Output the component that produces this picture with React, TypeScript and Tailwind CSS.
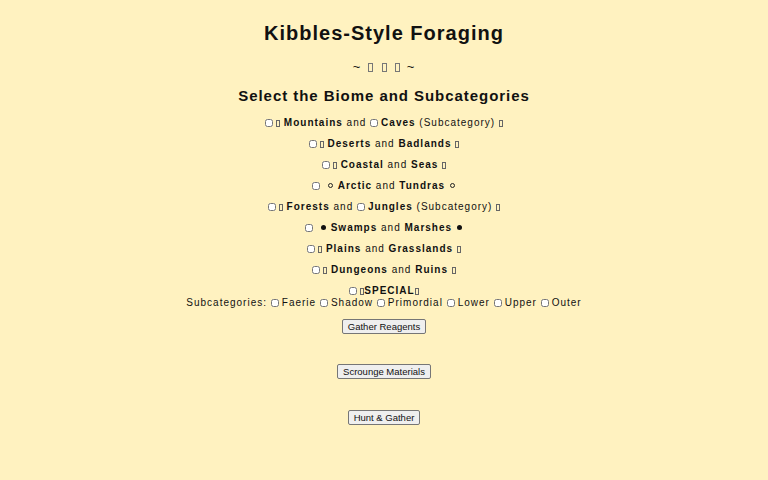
import React from "react";

const Box = () => (
  <input type="checkbox" className="m-0 mr-[3px] h-[8px] w-[8px] align-[-1px]" />
);

// Placeholder glyph box shown for pictographs the font can't draw
const G = () => (
  <span className="inline-block h-[7px] w-[4px] border border-[#666] align-[-1px]" />
);

const BigG = () => (
  <span className="mx-[2px] inline-block h-[9px] w-[5px] border border-[#777] align-[-1px]" />
);

const Ring = () => (
  <span className="mx-[1px] inline-block h-[5px] w-[5px] rounded-full border border-[#222] align-[1px]" />
);

const Dot = () => (
  <span className="mx-[1px] inline-block h-[5px] w-[5px] rounded-full bg-[#111] align-[1px]" />
);

const Row = ({ children }: { children: React.ReactNode }) => (
  <div className="h-[21px] leading-[21px]">{children}</div>
);

export default function App() {
  return (
    <div
      className="min-h-[480px] bg-[#fff2c0] text-[#111] text-center pt-[21px]"
      style={{ fontFamily: '"Liberation Sans", Arial, sans-serif' }}
    >
      <h1 className="text-[20px] font-bold tracking-[1px] leading-[24px]">Kibbles-Style Foraging</h1>
      <div className="mt-[12px] text-[13px] tracking-[1px] leading-[20px]">
        ~ <BigG /> <BigG /> <BigG /> ~
      </div>
      <h2 className="mt-[9px] text-[15px] font-bold tracking-[0.95px] leading-[20px]">Select the Biome and Subcategories</h2>
      <div className="mt-[6px] text-[10px] tracking-[1px]">
        <Row><Box /><G /> <b>Mountains</b> and <Box /><b>Caves</b> (Subcategory) <G /></Row>
        <Row><Box /><G /> <b>Deserts</b> and <b>Badlands</b> <G /></Row>
        <Row><Box /><G /> <b>Coastal</b> and <b>Seas</b> <G /></Row>
        <Row><Box /> <Ring /> <b>Arctic</b> and <b>Tundras</b> <Ring /></Row>
        <Row><Box /><G /> <b>Forests</b> and <Box /><b>Jungles</b> (Subcategory) <G /></Row>
        <Row><Box /> <Dot /> <b>Swamps</b> and <b>Marshes</b> <Dot /></Row>
        <Row><Box /><G /> <b>Plains</b> and <b>Grasslands</b> <G /></Row>
        <Row><Box /><G /> <b>Dungeons</b> and <b>Ruins</b> <G /></Row>
        <Row><Box /><b><G />SPECIAL<G /></b></Row>
        <div className="-mt-[4px] leading-[11px]">
          Subcategories: <Box />Faerie <Box />Shadow <Box />Primordial <Box />Lower <Box />Upper <Box />Outer
        </div>
      </div>
      <div className="mt-[11px] flex flex-col items-center gap-[30px] tracking-normal">
        <button className="text-[9.5px] px-[5px] h-[15px] leading-[13px] border border-[#767676] bg-[#efefef] rounded-[2px]">Gather Reagents</button>
        <button className="text-[9.5px] px-[5px] h-[15px] leading-[13px] border border-[#767676] bg-[#efefef] rounded-[2px]">Scrounge Materials</button>
        <button className="mt-[1px] text-[9.5px] px-[5px] h-[15px] leading-[13px] border border-[#767676] bg-[#efefef] rounded-[2px]">Hunt &amp; Gather</button>
      </div>
    </div>
  );
}
